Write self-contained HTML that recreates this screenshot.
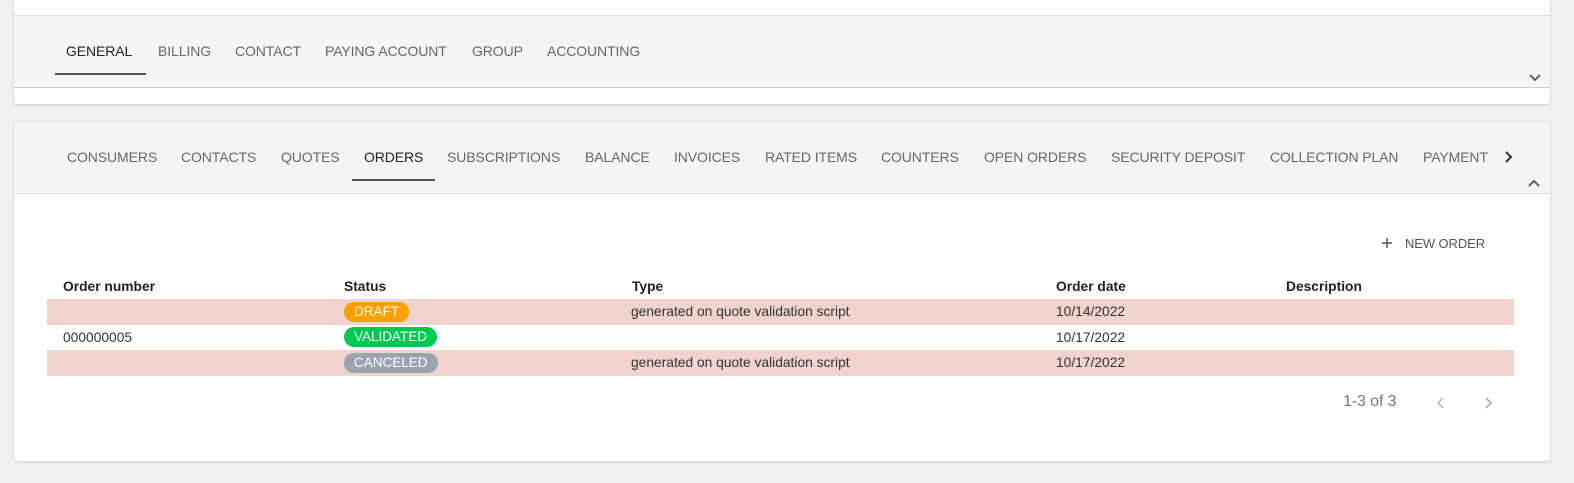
<!DOCTYPE html>
<html><head><meta charset="utf-8"><style>
*{margin:0;padding:0;box-sizing:border-box}
body{width:1574px;height:483px;background:#f0f0f0;font-family:"Liberation Sans",sans-serif;position:relative;overflow:hidden}
.card{position:absolute;left:14px;width:1536px;background:#fff;border-radius:4px;box-shadow:0 1px 3px rgba(0,0,0,.15)}
.bar{position:absolute;left:0;right:0;background:#f5f5f5}
.t{position:absolute;font-size:14px;color:#666;white-space:nowrap;letter-spacing:-0.1px}
.a{color:#222}
.ul{position:absolute;height:2px;background:#555}
.h{position:absolute;font-size:13.8px;font-weight:bold;color:#222;white-space:nowrap}
.c{position:absolute;font-size:13.8px;color:#333;white-space:nowrap}
.row{position:absolute;left:47px;width:1467px;height:26px;background:#f0d3cf}
.pill{position:absolute;left:344px;height:20px;border-radius:10px;color:#fff;font-size:13.5px;line-height:20px;padding:0 10px}
</style></head><body>
<div class="card" style="top:-10px;height:114px">
  <div class="bar" style="top:25px;height:73px;border-top:1px solid #e0e0e0;border-bottom:1px solid #ccc"></div>
</div>
<div class="t a" style="left:66px;top:43px">GENERAL</div>
<div class="ul" style="left:55px;top:73px;width:91px"></div>
<div class="t" style="left:158px;top:43px">BILLING</div>
<div class="t" style="left:235px;top:43px">CONTACT</div>
<div class="t" style="left:325px;top:43px">PAYING ACCOUNT</div>
<div class="t" style="left:472px;top:43px">GROUP</div>
<div class="t" style="left:547px;top:43px">ACCOUNTING</div>
<svg style="position:absolute;left:1528px;top:73px" width="14" height="10"><path d="M2 2l5 5 5-5" stroke="#555" stroke-width="1.8" fill="none"/></svg>

<div class="card" style="top:122px;height:339px">
  <div class="bar" style="top:0;height:72px;border-bottom:1px solid #ddd;border-radius:4px 4px 0 0"></div>
</div>
<div class="t" style="left:67px;top:149px">CONSUMERS</div>
<div class="t" style="left:181px;top:149px">CONTACTS</div>
<div class="t" style="left:281px;top:149px">QUOTES</div>
<div class="t a" style="left:364px;top:149px">ORDERS</div>
<div class="ul" style="left:352px;top:179px;width:83px"></div>
<div class="t" style="left:447px;top:149px">SUBSCRIPTIONS</div>
<div class="t" style="left:585px;top:149px">BALANCE</div>
<div class="t" style="left:674px;top:149px">INVOICES</div>
<div class="t" style="left:765px;top:149px">RATED ITEMS</div>
<div class="t" style="left:881px;top:149px">COUNTERS</div>
<div class="t" style="left:984px;top:149px">OPEN ORDERS</div>
<div class="t" style="left:1111px;top:149px">SECURITY DEPOSIT</div>
<div class="t" style="left:1270px;top:149px">COLLECTION PLAN</div>
<div class="t" style="left:1423px;top:149px">PAYMENT</div>
<svg style="position:absolute;left:1504px;top:151px" width="10" height="12"><path d="M2 1l5 5-5 5" stroke="#333" stroke-width="2" fill="none"/></svg>
<svg style="position:absolute;left:1527px;top:179px" width="14" height="10"><path d="M2 7l5-5 5 5" stroke="#555" stroke-width="1.8" fill="none"/></svg>

<svg style="position:absolute;left:1381px;top:237px" width="12" height="12"><path d="M6 1v10M1 6h10" stroke="#555" stroke-width="1.5"/></svg>
<div class="t" style="left:1405px;top:236px;font-size:13px;color:#555">NEW ORDER</div>

<div class="h" style="left:63px;top:279px">Order number</div>
<div class="h" style="left:344px;top:279px">Status</div>
<div class="h" style="left:632px;top:279px">Type</div>
<div class="h" style="left:1056px;top:279px">Order date</div>
<div class="h" style="left:1286px;top:279px">Description</div>
<div class="row" style="top:299px"></div>
<div class="row" style="top:350px"></div>
<div class="pill" style="top:302px;background:#ff9f00">DRAFT</div>
<div class="pill" style="top:327px;background:#00c853">VALIDATED</div>
<div class="pill" style="top:353px;background:#9aa3b0">CANCELED</div>
<div class="c" style="left:631px;top:304px">generated on quote validation script</div>
<div class="c" style="left:631px;top:355px">generated on quote validation script</div>
<div class="c" style="left:63px;top:330px">000000005</div>
<div class="c" style="left:1056px;top:304px">10/14/2022</div>
<div class="c" style="left:1056px;top:330px">10/17/2022</div>
<div class="c" style="left:1056px;top:355px">10/17/2022</div>

<div class="t" style="left:1343px;top:393px;font-size:16px;color:#777">1-3 of 3</div>
<svg style="position:absolute;left:1436px;top:396px" width="10" height="14"><path d="M7 2l-5 5 5 5" stroke="#bbb" stroke-width="1.6" fill="none"/></svg>
<svg style="position:absolute;left:1483px;top:396px" width="10" height="14"><path d="M3 2l5 5-5 5" stroke="#aaa" stroke-width="1.6" fill="none"/></svg>
</body></html>
